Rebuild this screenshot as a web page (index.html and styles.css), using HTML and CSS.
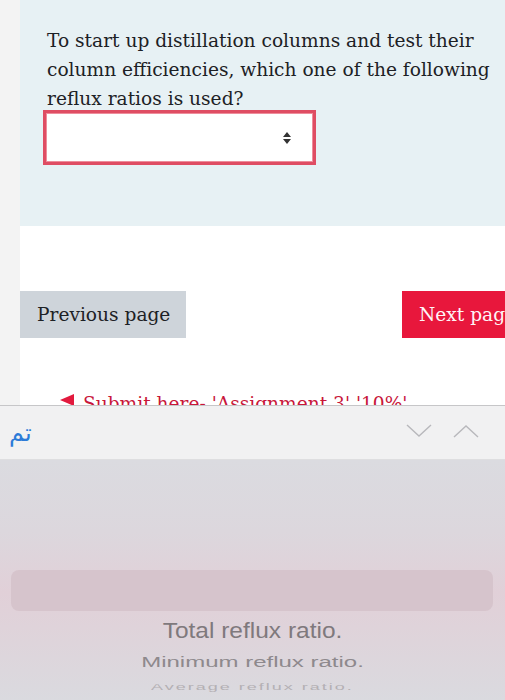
FILE: index.html
```html
<!DOCTYPE html>
<html lang="en">
<head>
<meta charset="utf-8">
<title>Quiz</title>
<link rel="stylesheet" href="styles.css">
</head>
<body>
<div class="screen">
  <div class="browser">
    <div class="side"></div>
    <div class="main">
      <div class="card">
        <p class="qtext">To start up distillation columns and test their column efficiencies, which one of the following reflux ratios is used?</p>
        <div class="select">
          <svg class="updown" width="10" height="14" viewBox="0 0 10 14"><path d="M5 1 L9 6 H1 Z M5 13 L9 8 H1 Z" fill="#333"/></svg>
        </div>
      </div>
      <div class="nav">
        <div class="btn prev">Previous page</div>
        <div class="btn next">Next page</div>
      </div>
      <div class="submit"><span class="tri"></span><span>Submit here- 'Assignment 3' '10%'</span></div>
    </div>
  </div>
  <div class="toolbar">
    <span class="done" lang="ar" dir="rtl">تم</span>
    <div class="arrows">
      <svg width="26" height="14" viewBox="0 0 26 14"><path d="M1 1 L13 12 L25 1" fill="none" stroke="#b8b8bc" stroke-width="1.4"/></svg>
      <svg width="26" height="14" viewBox="0 0 26 14"><path d="M1 13 L13 2 L25 13" fill="none" stroke="#b8b8bc" stroke-width="1.4"/></svg>
    </div>
  </div>
  <div class="picker">
    <div class="bar"></div>
    <div class="item i1">Total reflux ratio.</div>
    <div class="item i2">Minimum reflux ratio.</div>
    <div class="item i3">Average reflux ratio.</div>
  </div>
</div>
</body>
</html>
```
FILE: styles.css
```css
html, body {
  margin: 0;
  padding: 0;
  background: #ffffff;
}
.screen {
  width: 505px;
  height: 700px;
  overflow: hidden;
  display: flex;
  flex-direction: column;
}
.browser {
  height: 405px;
  display: flex;
  overflow: hidden;
  flex-shrink: 0;
}
.side {
  width: 20px;
  background: #f3f3f3;
  flex-shrink: 0;
}
.main {
  flex: 1;
  background: #ffffff;
  font-family: "DejaVu Serif", "Liberation Serif", serif;
  overflow: hidden;
}
.card {
  height: 226px;
  box-sizing: border-box;
  background: #e7f1f4;
  padding: 26px 8px 0 27px;
}
.qtext {
  margin: 0;
  font-size: 18.6px;
  line-height: 29px;
  color: #1d2125;
}
.select {
  width: 273px;
  height: 55px;
  box-sizing: border-box;
  margin-left: -4px;
  margin-top: -3px;
  background: #fff;
  border: 3px solid #df4d63;
  box-shadow: inset 0 0 0 1px #ee8d9b;
  display: flex;
  align-items: center;
  justify-content: flex-end;
  padding-right: 21px;
}
.nav {
  margin-top: 65px;
  display: flex;
  justify-content: space-between;
  height: 47px;
}
.btn {
  height: 47px;
  display: flex;
  align-items: center;
  font-size: 18.6px;
  box-sizing: border-box;
  white-space: nowrap;
}
.prev {
  width: 166px;
  background: #ced4da;
  color: #1d2125;
  padding-left: 17px;
}
.next {
  width: 110px;
  margin-right: -7px;
  background: #e8173c;
  color: #fff4f6;
  padding-left: 17px;
  overflow: hidden;
}
.submit {
  margin-top: 55px;
  margin-left: 40px;
  display: flex;
  align-items: center;
  gap: 9px;
  color: #c8163a;
  font-size: 18.6px;
  white-space: nowrap;
}
.tri {
  width: 0;
  height: 0;
  border-top: 6px solid transparent;
  border-bottom: 6px solid transparent;
  border-right: 14px solid #e21a3e;
  margin-top: -8px;
}
.toolbar {
  height: 55px;
  flex-shrink: 0;
  box-sizing: border-box;
  border-top: 1px solid #c6c6c8;
  border-bottom: 1px solid #dedee0;
  background: #f1f1f2;
  display: flex;
  align-items: center;
  justify-content: space-between;
  padding: 0 26px 0 9px;
}
.done {
  font-family: "DejaVu Sans", sans-serif;
  color: #2c7bd8;
  font-size: 24px;
  line-height: 30px;
}
.arrows {
  display: flex;
  gap: 21px;
  margin-top: -4px;
}
.picker {
  flex: 1;
  background: linear-gradient(180deg, #dbdbe0 0%, #dcd7dd 30%, #e1d0d8 55%, #dfd3da 70%, #dadadf 100%);
  display: flex;
  flex-direction: column;
  align-items: center;
  font-family: "Liberation Sans", "DejaVu Sans", sans-serif;
  padding-top: 110px;
}
.bar {
  width: 482px;
  height: 41px;
  border-radius: 8px;
  background: #d6c4cc;
  align-self: flex-start;
  margin-left: 11px;
}
.item {
  white-space: nowrap;
}
.i1 {
  margin-top: 6px;
  font-size: 24.5px;
  line-height: 28px;
  color: #7f797d;
  transform: scaleY(0.9);
}
.i2 {
  font-size: 24px;
  line-height: 28px;
  color: #8e898d;
  transform: scaleY(0.62);
  margin-top: 3px;
}
.i3 {
  font-size: 18px;
  line-height: 22px;
  letter-spacing: 2px;
  color: #b4b0b4;
  transform: scaleY(0.5);
  margin-top: 0;
}
```
